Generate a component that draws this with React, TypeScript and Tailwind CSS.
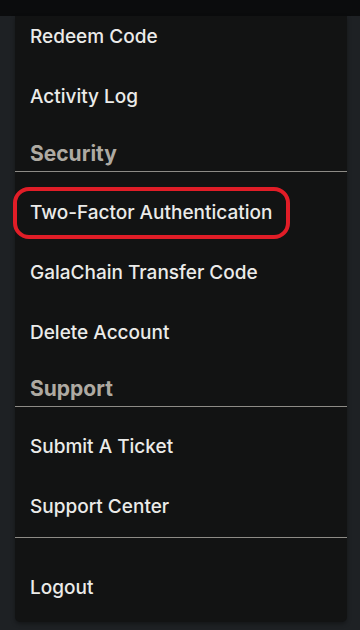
const ACCOUNT = ["Redeem Code", "Activity Log"];
const SECURITY = ["Two-Factor Authentication", "GalaChain Transfer Code", "Delete Account"];
const SUPPORT = ["Submit A Ticket", "Support Center"];

function Item({ label, highlight }: { label: string; highlight?: boolean }) {
  return (
    <div className="relative flex h-[60px] items-center px-[15px]">
      <span className="text-[19px] font-medium leading-6 text-[#ebebe9]">{label}</span>
      {highlight && (
        <span className="pointer-events-none absolute left-[-2px] top-[4px] h-[52px] w-[277px] rounded-[16px] border-4 border-[#e11d27]" />
      )}
    </div>
  );
}

function Heading({ label, tall }: { label: string; tall?: boolean }) {
  return (
    <div
      className={`flex items-end border-b border-[#8d8b86] px-[15px] pb-[5px] ${tall ? "h-[45px]" : "h-[44px]"}`}
    >
      <span className="text-[21px] font-bold leading-6 text-[#aeaaa2]">{label}</span>
    </div>
  );
}

export default function App() {
  return (
    <div
      className="h-[630px] w-[360px] overflow-hidden bg-[#1e2124]"
      style={{ fontFamily: "Inter, 'Noto Sans', sans-serif" }}
    >
      <div className="h-[16px] bg-[#0b0c0d]" />
      <nav className="ml-[15px] w-[332px] rounded-b-[5px] bg-[#121313] pb-[4px] shadow-[0_2px_4px_rgba(0,0,0,0.35)]">
        <div className="flex h-[51px] items-center px-[15px] pb-[9px]">
          <span className="text-[19px] font-medium leading-6 text-[#ebebe9]">{ACCOUNT[0]}</span>
        </div>
        <Item label={ACCOUNT[1]} />

        <Heading label="Security" tall />
        <div className="pt-[11px]">
          {SECURITY.map((s, i) => (
            <Item key={s} label={s} highlight={i === 0} />
          ))}
        </div>

        <Heading label="Support" />
        <div className="border-b border-[#8d8b86] pt-[10px]">
          {SUPPORT.map((s) => (
            <Item key={s} label={s} />
          ))}
        </div>

        <div className="pt-[20px]">
          <Item label="Logout" />
        </div>
      </nav>
    </div>
  );
}
